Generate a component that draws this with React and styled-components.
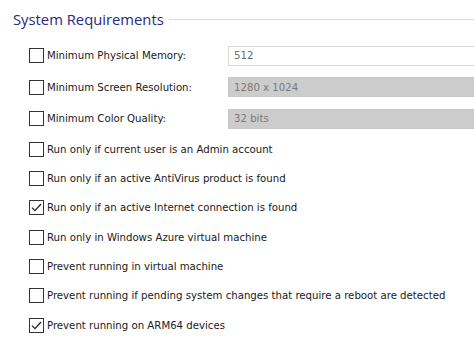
import React from "react";
import styled, { createGlobalStyle } from "styled-components";

const Global = createGlobalStyle`
  html, body {
    margin: 0;
    padding: 0;
    background: #ffffff;
  }
  body {
    font-family: "DejaVu Sans Condensed", "Liberation Sans", sans-serif;
  }
`;

const Panel = styled.div`
  width: 474px;
  height: 348px;
  overflow: hidden;
  background: #fff;
`;

const Header = styled.div`
  display: flex;
  align-items: center;
  gap: 5px;
  padding: 7px 0 0 13px;
  height: 24px;

  h2 {
    margin: 0;
    font-family: "Open Sans", "Noto Sans", sans-serif;
    font-weight: 400;
    font-size: 14.8px;
    color: #282a7c;
    white-space: nowrap;
  }
  hr {
    flex: 1;
    border: 0;
    border-top: 1px solid #dcdcdc;
    margin: 1px 0 0;
  }
`;

const List = styled.div`
  display: flex;
  flex-direction: column;
  padding: 9px 0 0 29px;
`;

const Row = styled.label`
  display: flex;
  align-items: center;
  height: ${(p) => (p.$tall ? "31.5px" : "29.33px")};
  font-size: 11.3px;
  color: #1a1a1a;
  white-space: nowrap;
`;

const Box = styled.span`
  box-sizing: border-box;
  width: 15px;
  height: 15px;
  border: 1px solid #333;
  background: #fff;
  margin-right: 3px;
  flex: none;
  display: flex;
  align-items: center;
  justify-content: center;
`;

const Label = styled.span`
  width: ${(p) => (p.$fixed ? "181px" : "auto")};
  flex: none;
`;

const Field = styled.div`
  box-sizing: border-box;
  flex: 1;
  height: 20px;
  padding: 0 5px;
  display: flex;
  align-items: center;
  border: 1px solid ${(p) => (p.$disabled ? "#c8c8c8" : "#d8d8d8")};
  border-right: 0;
  background: ${(p) => (p.$disabled ? "#cccccc" : "#fff")};
  color: ${(p) => (p.$disabled ? "#7a7a7a" : "#6a6a6a")};
  font-size: 11.3px;
`;

const Check = () => (
  <svg width="11" height="9" viewBox="0 0 11 9">
    <path d="M1 4.6 L4 7.6 L10 1" fill="none" stroke="#222" strokeWidth="1.3" />
  </svg>
);

const fields = [
  { label: "Minimum Physical Memory:", value: "512" },
  { label: "Minimum Screen Resolution:", value: "1280 x 1024", disabled: true },
  { label: "Minimum Color Quality:", value: "32 bits", disabled: true },
];

const options = [
  { label: "Run only if current user is an Admin account" },
  { label: "Run only if an active AntiVirus product is found" },
  { label: "Run only if an active Internet connection is found", checked: true },
  { label: "Run only in Windows Azure virtual machine" },
  { label: "Prevent running in virtual machine" },
  { label: "Prevent running if pending system changes that require a reboot are detected" },
  { label: "Prevent running on ARM64 devices", checked: true },
];

export default function App() {
  return (
    <Panel>
      <Global />
      <Header>
        <h2>System Requirements</h2>
        <hr />
      </Header>
      <List>
        {fields.map((f) => (
          <Row key={f.label} $tall>
            <Box />
            <Label $fixed>{f.label}</Label>
            <Field $disabled={f.disabled}>{f.value}</Field>
          </Row>
        ))}
        {options.map((o) => (
          <Row key={o.label}>
            <Box>{o.checked && <Check />}</Box>
            <Label>{o.label}</Label>
          </Row>
        ))}
      </List>
    </Panel>
  );
}
